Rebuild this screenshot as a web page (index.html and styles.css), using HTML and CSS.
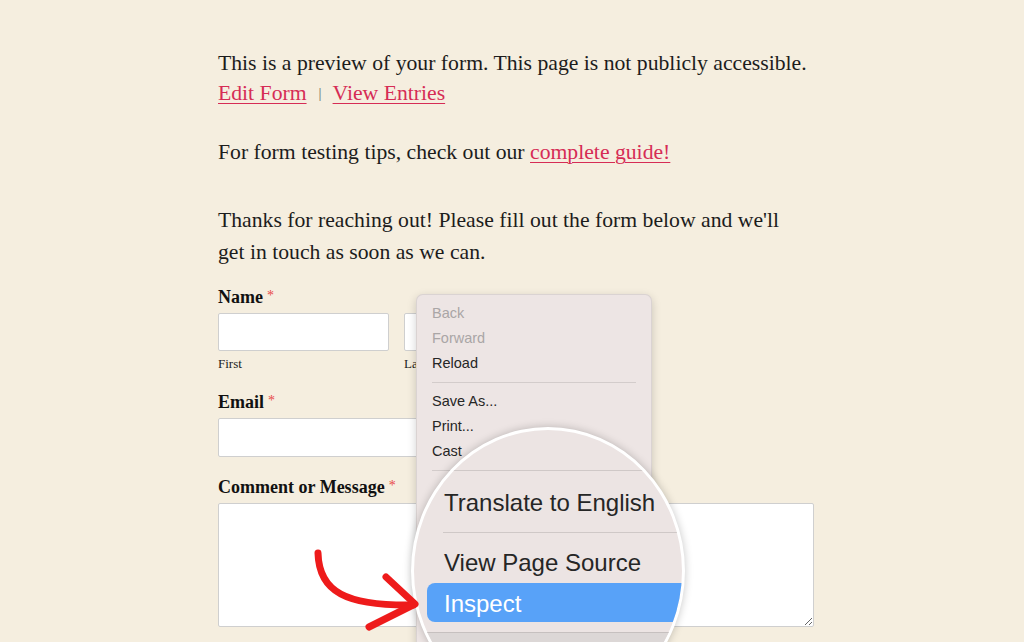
FILE: index.html
```html
<!DOCTYPE html>
<html lang="en">
<head>
    <meta charset="UTF-8">
    <meta name="viewport" content="width=device-width, initial-scale=1.0">
    <title>Form Preview</title>
    <link rel="stylesheet" href="styles.css">
</head>
<body>
    <div class="stage">
        <div class="page">
            <p class="notice">This is a preview of your form. This page is not publicly accessible.<br><a href="#">Edit Form</a><span class="pipe">|</span><a href="#">View Entries</a></p>
            <p class="tips">For form testing tips, check out our <a href="#">complete guide!</a></p>
            <p class="intro">Thanks for reaching out! Please fill out the form below and we'll get in touch as soon as we can.</p>

            <form class="form">
                <!-- 姓名 -->
                <div class="field">
                    <label class="label">Name<span class="req">*</span></label>
                    <div class="name-row">
                        <div class="name-col">
                            <input type="text" class="input">
                            <span class="sub">First</span>
                        </div>
                        <div class="name-col">
                            <input type="text" class="input">
                            <span class="sub">Last</span>
                        </div>
                    </div>
                </div>
                <!-- 邮箱 -->
                <div class="field">
                    <label class="label">Email<span class="req">*</span></label>
                    <input type="email" class="input medium">
                </div>
                <!-- 留言 -->
                <div class="field">
                    <label class="label">Comment or Message<span class="req">*</span></label>
                    <textarea class="textarea"></textarea>
                </div>
            </form>
        </div>

        <!-- 右键菜单 -->
        <div class="ctx-menu">
            <div class="item disabled">Back</div>
            <div class="item disabled">Forward</div>
            <div class="item">Reload</div>
            <div class="sep"></div>
            <div class="item">Save As...</div>
            <div class="item">Print...</div>
            <div class="item">Cast</div>
            <div class="sep"></div>
        </div>

        <!-- 放大镜 -->
        <div class="lens">
            <div class="lens-menu">
                <div class="lens-sep top"></div>
                <div class="lens-item">Translate to English</div>
                <div class="lens-sep"></div>
                <div class="lens-item">View Page Source</div>
                <div class="lens-item active">Inspect</div>
                <div class="lens-foot"></div>
            </div>
        </div>

        <svg class="arrow" width="130" height="100" viewBox="0 0 130 100">
            <path d="M18 13 C19 52 46 66 113 65" fill="none" stroke="#ee1b1b" stroke-width="7" stroke-linecap="round"/>
            <path d="M86 37 L115 64 L69 87" fill="none" stroke="#ee1b1b" stroke-width="7" stroke-linecap="round" stroke-linejoin="round"/>
        </svg>
    </div>
</body>
</html>
```

FILE: styles.css
```css
*{
    margin: 0;
    padding: 0;
    box-sizing: border-box;
}
body{
    background: #f5eedf;
    color: #1c1c1c;
    font-family: "Liberation Serif", serif;
}
.stage{
    position: relative;
    height: 642px;
    overflow: hidden;
}
.page{
    max-width: 604px;
    margin: 0 auto;
    padding: 48px 0 0 8px;
}
.page p{
    font-size: 21.7px;
}
.page a{
    color: #d62c55;
    text-decoration: underline;
    text-decoration-thickness: 1px;
    text-underline-offset: 3px;
}
.notice{
    line-height: 30px;
    margin-bottom: 27px;
    white-space: nowrap;
}
.pipe{
    color: #666;
    font-size: 15px;
    margin: 0 11px 0 12px;
    position: relative;
    top: -2px;
}
.tips{
    line-height: 30px;
    margin-bottom: 37px;
}
.intro{
    max-width: 585px;
    line-height: 32px;
    margin-bottom: 17px;
}

/* 表单 */
.field{
    margin-bottom: 18px;
}
.label{
    display: block;
    font-size: 18px;
    font-weight: bold;
    line-height: 22px;
    margin-bottom: 5px;
    color: #111;
}
.req{
    color: #e84848;
    font-size: 14px;
    font-weight: normal;
    margin-left: 4px;
    vertical-align: 3px;
}
.name-row{
    display: flex;
    gap: 15px;
    width: 357px;
}
.name-col{
    flex: 1;
    display: flex;
    flex-direction: column;
}
.input{
    display: block;
    width: 100%;
    height: 38px;
    background: #fff;
    border: 1px solid #cfcfcf;
    border-radius: 2px;
}
.input.medium{
    width: 358px;
    height: 39px;
}
.sub{
    font-size: 13px;
    line-height: 16px;
    margin-top: 5px;
    color: #222;
}
.textarea{
    display: block;
    width: 596px;
    height: 124px;
    margin-top: 1px;
    background: #fff;
    border: 1px solid #cfcfcf;
    border-radius: 2px;
    resize: both;
}

/* 右键菜单 */
.ctx-menu{
    position: absolute;
    left: 416px;
    top: 294px;
    width: 236px;
    height: 360px;
    background: #ede5e4;
    border: 1px solid rgba(0,0,0,.08);
    border-radius: 7px;
    box-shadow: 0 3px 10px rgba(0,0,0,.18);
    padding-top: 6px;
    font-family: "Liberation Sans", sans-serif;
}
.ctx-menu .item{
    height: 25px;
    line-height: 25px;
    padding-left: 15px;
    font-size: 14.5px;
    color: #262626;
}
.ctx-menu .item.disabled{
    color: #aaa6a6;
}
.ctx-menu .sep{
    height: 1px;
    background: #d3cccb;
    margin: 6px 15px;
}

/* 放大镜 */
.lens{
    position: absolute;
    left: 411px;
    top: 427px;
    width: 274px;
    height: 288px;
    border: 3px solid #fff;
    border-radius: 50%;
    overflow: hidden;
    background: #ece4e3;
    box-shadow: 0 0 8px rgba(0,0,0,.22);
    font-family: "Liberation Sans", sans-serif;
}
.lens-menu{
    width: 420px;
    padding: 40px 0 0 13px;
}
.lens-sep{
    height: 1px;
    background: #cfc8c7;
    margin: 9px 0 10px 16px;
}
.lens-sep.top{
    margin: 0 0 12px 8px;
}
.lens-item{
    height: 40px;
    line-height: 40px;
    padding-left: 17px;
    font-size: 24px;
    color: #262626;
}
.lens-item.active{
    height: 39px;
    line-height: 41px;
    background: #58a2f8;
    color: #fff;
    border-radius: 8px 0 0 8px;
}
.lens-foot{
    margin-top: 10px;
    height: 60px;
    border-top: 1px solid #c6c0bf;
    background: #dcd7d6;
}

.arrow{
    position: absolute;
    left: 300px;
    top: 540px;
}
```
